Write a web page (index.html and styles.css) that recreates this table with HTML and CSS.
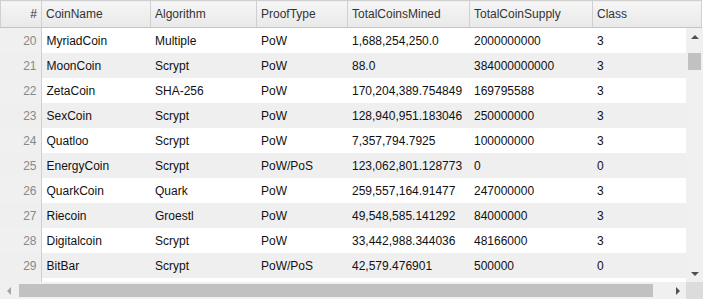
FILE: index.html
```html
<!DOCTYPE html>
<html lang="en">
<head>
  <meta charset="UTF-8" />
  <title>Coin Grid</title>
  <link rel="stylesheet" href="styles.css">
</head>
<body>
  <div class="grid">
    <!-- Header -->
    <div class="grid-head">
      <table class="cols">
        <colgroup>
          <col class="c-num"><col class="c-name"><col class="c-algo"><col class="c-proof"><col class="c-mined"><col class="c-supply"><col class="c-class">
        </colgroup>
        <tr>
          <th class="num">#</th>
          <th>CoinName</th>
          <th>Algorithm</th>
          <th>ProofType</th>
          <th>TotalCoinsMined</th>
          <th>TotalCoinSupply</th>
          <th>Class</th>
        </tr>
      </table>
    </div>
    <!-- Rows -->
    <div class="grid-body">
      <table class="cols">
        <colgroup>
          <col class="c-num"><col class="c-name"><col class="c-algo"><col class="c-proof"><col class="c-mined"><col class="c-supply"><col class="c-class">
        </colgroup>
        <tr><td class="num">20</td><td>MyriadCoin</td><td>Multiple</td><td>PoW</td><td>1,688,254,250.0</td><td>2000000000</td><td>3</td></tr>
        <tr><td class="num">21</td><td>MoonCoin</td><td>Scrypt</td><td>PoW</td><td>88.0</td><td>384000000000</td><td>3</td></tr>
        <tr><td class="num">22</td><td>ZetaCoin</td><td>SHA-256</td><td>PoW</td><td>170,204,389.754849</td><td>169795588</td><td>3</td></tr>
        <tr><td class="num">23</td><td>SexCoin</td><td>Scrypt</td><td>PoW</td><td>128,940,951.183046</td><td>250000000</td><td>3</td></tr>
        <tr><td class="num">24</td><td>Quatloo</td><td>Scrypt</td><td>PoW</td><td>7,357,794.7925</td><td>100000000</td><td>3</td></tr>
        <tr><td class="num">25</td><td>EnergyCoin</td><td>Scrypt</td><td>PoW/PoS</td><td>123,062,801.128773</td><td>0</td><td>0</td></tr>
        <tr><td class="num">26</td><td>QuarkCoin</td><td>Quark</td><td>PoW</td><td>259,557,164.91477</td><td>247000000</td><td>3</td></tr>
        <tr><td class="num">27</td><td>Riecoin</td><td>Groestl</td><td>PoW</td><td>49,548,585.141292</td><td>84000000</td><td>3</td></tr>
        <tr><td class="num">28</td><td>Digitalcoin</td><td>Scrypt</td><td>PoW</td><td>33,442,988.344036</td><td>48166000</td><td>3</td></tr>
        <tr><td class="num">29</td><td>BitBar</td><td>Scrypt</td><td>PoW/PoS</td><td>42,579.476901</td><td>500000</td><td>0</td></tr>
        <tr class="filler"><td class="num"></td><td></td><td></td><td></td><td></td><td></td><td></td></tr>
      </table>
    </div>
    <!-- Vertical scrollbar -->
    <div class="vscroll">
      <div class="btn"><span class="arrow up"></span></div>
      <div class="track"><div class="thumb"></div></div>
      <div class="btn"><span class="arrow down"></span></div>
    </div>
    <!-- Horizontal scrollbar -->
    <div class="hscroll">
      <div class="btn"><span class="arrow left"></span></div>
      <div class="track"><div class="thumb"></div></div>
      <div class="btn"><span class="arrow right"></span></div>
    </div>
    <div class="corner"></div>
  </div>
</body>
</html>
```

FILE: styles.css
```css
/* Global */
body {
  margin: 0;
  font-family: "Liberation Sans", Arial, sans-serif;
  font-size: 12px;
  color: #000;
  background: #fff;
}
.grid {
  width: 703px;
  height: 302px;
  display: grid;
  grid-template-columns: 686px 17px;
  grid-template-rows: 28px 254px 17px 3px;
  overflow: hidden;
}
/* Shared column widths */
.cols {
  border-collapse: collapse;
  table-layout: fixed;
  width: 701px;
}
.c-num { width: 41px; }
.c-name { width: 109px; }
.c-algo { width: 106px; }
.c-proof { width: 91px; }
.c-mined { width: 122px; }
.c-supply { width: 123px; }
.c-class { width: 109px; }
/* Header */
.grid-head {
  grid-column: 1 / 3;
  grid-row: 1;
  width: 701px;
}
.grid-head th {
  height: 27px;
  padding: 0 4px;
  box-sizing: border-box;
  text-align: left;
  font-weight: normal;
  color: #333;
  background: linear-gradient(#f6f6f6, #e9e9e9);
  border: 1px solid #d0d0d0;
  border-bottom-color: #c4c4c4;
  white-space: nowrap;
  overflow: hidden;
}
.grid-head th.num {
  text-align: right;
  padding-right: 4px;
}
/* Body */
.grid-body {
  grid-column: 1;
  grid-row: 2;
  overflow: hidden;
}
.grid-body td {
  height: 25px;
  padding: 0 5px;
  box-sizing: border-box;
  white-space: nowrap;
  overflow: hidden;
  color: #111;
}
.grid-body tr:nth-child(even) td {
  background: #efefef;
}
.grid-body td.num {
  background: #f0f0f0;
  color: #888;
  text-align: right;
  padding-right: 4px;
  border-right: 1px solid #cfcfcf;
}
/* Scrollbars */
.vscroll, .hscroll {
  background: #f0f0f0;
  display: flex;
}
.vscroll {
  grid-column: 2;
  grid-row: 2;
  flex-direction: column;
}
.hscroll {
  grid-column: 1;
  grid-row: 3;
}
.btn {
  flex: 0 0 17px;
  display: flex;
  align-items: center;
  justify-content: center;
}
.track {
  flex: 1;
  position: relative;
}
.vscroll .thumb {
  margin: 8px 2px 0 2px;
  height: 17px;
  background: #c1c1c1;
}
.hscroll .thumb {
  margin: 2px 0 0 2px;
  width: 634px;
  height: 13px;
  background: #c1c1c1;
}
.corner {
  grid-column: 2;
  grid-row: 3;
  background: #dcdcdc;
}
.arrow {
  width: 0;
  height: 0;
  border: 4px solid transparent;
}
.arrow.up { border-bottom-color: #505050; border-top-width: 0; }
.arrow.down { border-top-color: #505050; border-bottom-width: 0; }
.arrow.left { border-right-color: #a3a3a3; border-left-width: 0; }
.arrow.right { border-left-color: #505050; border-right-width: 0; }
```
